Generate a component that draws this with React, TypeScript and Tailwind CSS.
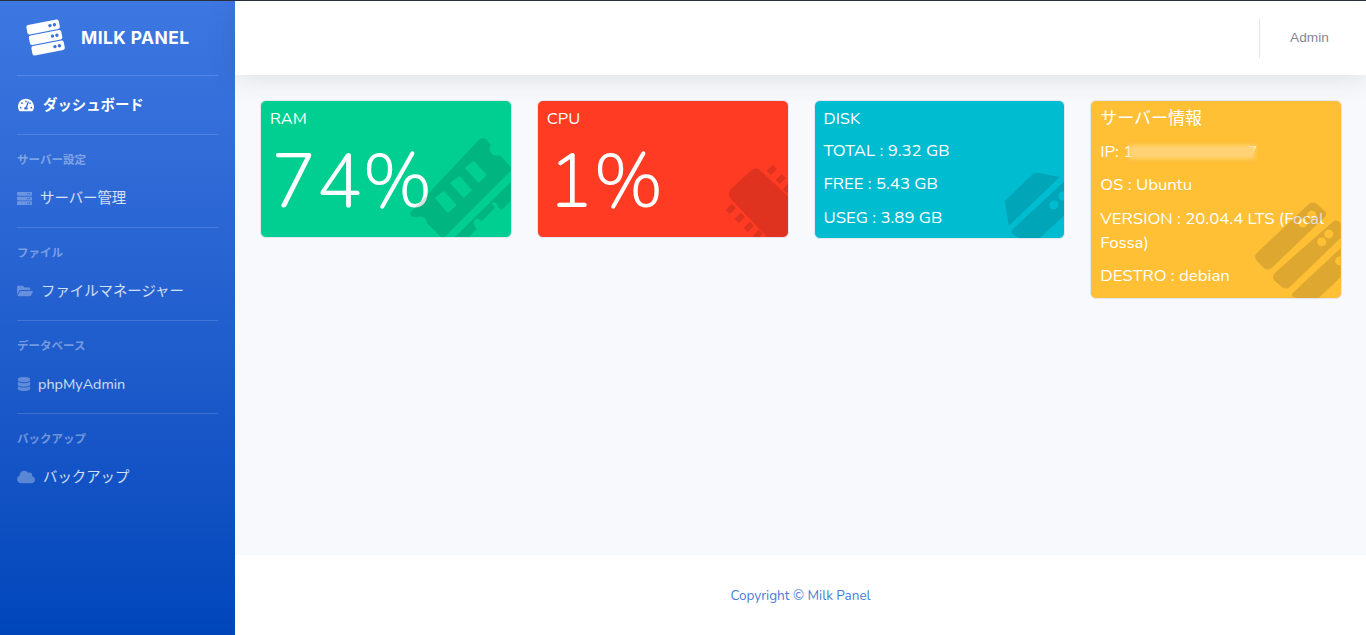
import type { ReactNode } from 'react';
import { FaCloud, FaDatabase, FaFolderOpen, FaServer, FaTachometerAlt } from 'react-icons/fa';

const bodyFont = "font-['Nunito','Lato','Noto_Sans_CJK_JP',sans-serif]";

function Logo() {
  return (
    <svg width="41" height="38" viewBox="0 0 41 38" className="shrink-0">
      {[0, 1, 2].map((i) => (
        <g key={i} transform={`translate(${1 + i * 2.5} ${6.5 + i * 10.5}) rotate(-11)`}>
          <rect x="0" y="0" width="33" height="9.5" rx="2" fill="#fff" />
          <circle cx="23.5" cy="4.7" r="1.7" fill="#3a74de" />
          <circle cx="28" cy="4.7" r="1.7" fill="#3a74de" />
        </g>
      ))}
    </svg>
  );
}

function RamMark() {
  return (
    <svg viewBox="0 0 250 136" className="absolute inset-0 h-full w-full">
      <path
        fillRule="evenodd"
        fillOpacity="0.12"
        d="M150 111 L218 39 Q222 35 226 39 L230 44 A7 7 0 0 0 239 54 L252 68 L182 138 L166 122 A6 6 0 0 0 158 116 L152 116 Q148 114 150 111 Z M174 97 L187 112 L196 104 L183 90 Z M189 82 L203 97 L211 89 L199 75 Z M204 67 L218 82 L226 74 L213 60 Z"
      />
      <path
        fillOpacity="0.12"
        d="M192 138 L250 81 L250 100 L241 109 L237 106 A4 4 0 0 0 231 102 L234 107 L221 120 L218 118 A4 4 0 0 0 213 123 L216 128 L206 138 Z"
      />
    </svg>
  );
}

function CpuMark() {
  const pins = [
    [234, 69],
    [243, 78],
    [250, 87],
    [193, 108],
    [202, 117],
    [211, 126],
    [220, 134],
  ];
  return (
    <svg viewBox="0 0 250 136" className="absolute inset-0 h-full w-full">
      <g fillOpacity="0.12">
        <path d="M193 88 L214 69 Q218 66 222 69 L252 97 L252 137 L230 137 L193 98 Q189 93 193 88 Z" />
        {pins.map(([x, y]) => (
          <rect key={`${x}-${y}`} x={x - 4.5} y={y - 3} width="9" height="6" rx="1" transform={`rotate(-45 ${x} ${y})`} />
        ))}
      </g>
    </svg>
  );
}

function DiskMark() {
  return (
    <svg viewBox="0 0 250 137" className="absolute inset-0 h-full w-full">
      <g fillOpacity="0.12">
        <path d="M190 100 L217 74 Q220 71 224 72 L245 76 L194 125 Z" />
        <path
          fillRule="evenodd"
          d="M198 128 L250 80 L250 114 L225 137 L205 137 Q193 133 198 128 Z M239 99.5 a4.5 4.5 0 1 0 0.01 0 Z M248 90.5 a4.5 4.5 0 1 0 0.01 0 Z"
        />
      </g>
    </svg>
  );
}

function ServerMark() {
  return (
    <svg viewBox="0 0 250 197" className="absolute inset-0 h-full w-full">
      <path
        fillOpacity="0.13"
        fillRule="evenodd"
        d="M167 151 L218 103 Q222 100 226 103 L234 110 Q237 113 234 116 L181 167 Q177 170 173 167 L166 160 Q162 155 167 151 Z M212 117.5 a4.5 4.5 0 1 0 0.01 0 Z M221 109.5 a4.5 4.5 0 1 0 0.01 0 Z"
      />
      <path
        fillOpacity="0.13"
        fillRule="evenodd"
        d="M185 171 L243 120 Q246 118 250 122 L250 137 L199 186 Q195 189 191 186 L184 180 Q180 175 185 171 Z M231 136.5 a4.5 4.5 0 1 0 0.01 0 Z M238 128.5 a4.5 4.5 0 1 0 0.01 0 Z"
      />
      <path
        fillOpacity="0.13"
        fillRule="evenodd"
        d="M203 191 L250 147 L250 176 L228 197 L206 197 Q198 196 203 191 Z M249 155.5 a4.5 4.5 0 1 0 0.01 0 Z"
      />
    </svg>
  );
}

function NavHeading({ children }: { children: ReactNode }) {
  return (
    <>
      <hr className="mx-[17px] border-t border-white/15" />
      <div className="mx-[17px] mt-[17px] h-[17px] text-[11.5px] leading-[16px] font-bold text-white/40">{children}</div>
    </>
  );
}

function NavItem({ icon, label, gap }: { icon: ReactNode; label: string; gap: string }) {
  return (
    <a className={`mx-[17px] flex h-[58px] items-center text-[14.4px] text-white/80 ${gap}`}>
      <span className="text-[15px] text-white/30">{icon}</span>
      <span className="pt-[2px]">{label}</span>
    </a>
  );
}

function Sidebar() {
  return (
    <aside className={`flex w-[235px] shrink-0 flex-col bg-gradient-to-b from-[#3d77e1] to-[#0046bb] ${bodyFont}`}>
      <div className="flex h-[74px] items-center gap-[15px] pl-[25px]">
        <Logo />
        <span className="font-['Inter',sans-serif] text-[17.4px] font-bold tracking-[0.45px] text-white">MILK PANEL</span>
      </div>
      <hr className="mx-[17px] border-t border-white/15" />
      <a className="mx-[17px] flex h-[58px] items-center gap-[9px] pl-[1px] text-[14.4px] font-bold text-white">
        <FaTachometerAlt className="text-[16px]" />
        <span className="pt-[2px]">ダッシュボード</span>
      </a>
      <NavHeading>サーバー設定</NavHeading>
      <NavItem icon={<FaServer />} label="サーバー管理" gap="gap-[8px]" />
      <NavHeading>ファイル</NavHeading>
      <NavItem icon={<FaFolderOpen className="text-[16px]" />} label="ファイルマネージャー" gap="gap-[8px]" />
      <NavHeading>データベース</NavHeading>
      <NavItem icon={<FaDatabase className="text-[14px]" />} label="phpMyAdmin" gap="gap-[7px]" />
      <NavHeading>バックアップ</NavHeading>
      <NavItem icon={<FaCloud className="text-[18px]" />} label="バックアップ" gap="gap-[8px]" />
    </aside>
  );
}

function Card({ className, children }: { className: string; children: ReactNode }) {
  return (
    <div className={`relative overflow-hidden rounded-[6px] border border-[#e3e6f0] pt-[6px] pl-[9px] text-[16.8px] leading-[24px] text-white ${className}`}>
      {children}
    </div>
  );
}

function BigValue({ value }: { value: string }) {
  return <div className="pl-[1px] pt-[3px] text-[76px] leading-[96px] font-light">{value}</div>;
}

function Line({ children }: { children: ReactNode }) {
  return <p className="mb-[9.5px]">{children}</p>;
}

export default function App() {
  return (
    <div className="flex h-screen flex-col overflow-hidden bg-[#f8f9fc]">
      <div className="h-px shrink-0 bg-[#2a2e3b]" />
      <div className="flex min-h-0 flex-1">
        <Sidebar />
        <div className={`flex min-w-0 flex-1 flex-col ${bodyFont}`}>
          <header className="flex h-[74px] shrink-0 items-center justify-end bg-white shadow-[0_2px_28px_rgba(58,59,69,0.15)]">
            <div className="h-[40px] w-px bg-[#e3e6f0]" />
            <span className="w-[106px] pl-[30px] font-['Liberation_Sans',sans-serif] text-[13.7px] text-[#858796]">Admin</span>
          </header>
          <main className="grid flex-1 grid-cols-4 items-start gap-x-[25px] pt-[25px] pr-[24px] pl-[25px]">
            <Card className="h-[138px] bg-[#00cf91]">
              <div className="text-[16.4px]">RAM</div>
              <BigValue value="74%" />
              <RamMark />
            </Card>
            <Card className="h-[138px] bg-[#ff3b24]">
              <div className="text-[16.4px]">CPU</div>
              <BigValue value="1%" />
              <CpuMark />
            </Card>
            <Card className="h-[139px] bg-[#00bcd1]">
              <div className="mb-[7.5px] text-[16.4px]">DISK</div>
              <Line>TOTAL : 9.32 GB</Line>
              <Line>FREE : 5.43 GB</Line>
              <Line>USEG : 3.89 GB</Line>
              <DiskMark />
            </Card>
            <Card className="h-[199px] bg-[#ffc036]">
              <div className="mb-[8.5px] text-[17px]">サーバー情報</div>
              <Line>
                IP: 1
                <span className="-mr-[8px] -ml-[4px] inline-block h-[14px] w-[126px] bg-[#ffd277] align-middle blur-[2px]" />7
              </Line>
              <Line>OS : Ubuntu</Line>
              <Line>VERSION : 20.04.4 LTS (Focal Fossa)</Line>
              <Line>DESTRO : debian</Line>
              <ServerMark />
            </Card>
          </main>
          <footer className="flex h-[80px] shrink-0 items-center justify-center bg-white pt-[3px] text-[13.5px] text-[#4a7dd6]">
            Copyright © Milk Panel
          </footer>
        </div>
      </div>
    </div>
  );
}
